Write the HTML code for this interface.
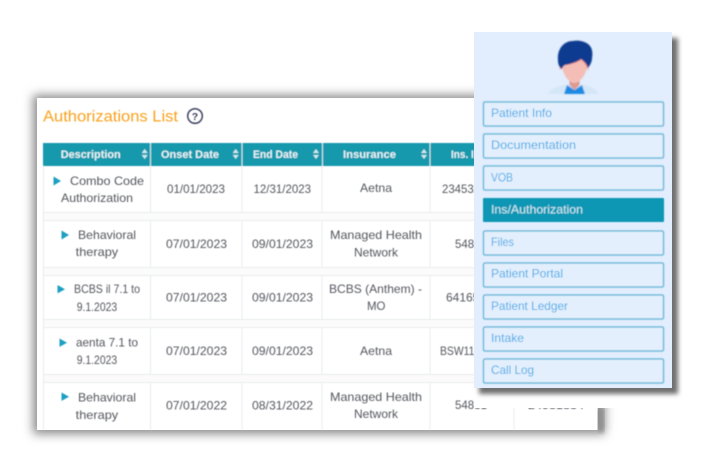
<!DOCTYPE html>
<html lang="en">
<head>
<meta charset="utf-8">
<title>Authorizations List</title>
<style>
html,body{margin:0;padding:0;background:#fff;width:710px;height:473px;overflow:hidden}
svg{display:block;position:absolute;left:0;top:0}
text{font-family:"Liberation Sans",sans-serif}
.c{font-size:12px;fill:#54575e}
.h{font-size:11px;font-weight:bold;fill:#e6f4f6}
.m{font-size:12px;fill:#45ace6}
.l{stroke:#e8ebee;stroke-width:1}
.b{fill:#e4effd;stroke:#72bbdb;stroke-width:1.5}
.a{fill:#1a9fc2}
.s{fill:#cfe9ee}
</style>
</head>
<body>
<svg width="710" height="473" viewBox="0 0 710 473" xmlns="http://www.w3.org/2000/svg">
<defs>
<filter id="sh1" x="-10%" y="-15%" width="120%" height="130%"><feGaussianBlur stdDeviation="5"/></filter>
<filter id="sh2" x="-15%" y="-10%" width="130%" height="120%"><feGaussianBlur stdDeviation="2.5"/></filter>
<filter id="soft" x="-2%" y="-2%" width="104%" height="104%"><feGaussianBlur stdDeviation="0.55"/></filter>
<filter id="av" x="-10%" y="-10%" width="120%" height="120%"><feGaussianBlur stdDeviation="0.7"/></filter>
</defs>

<!-- card shadow -->
<rect x="33" y="95" width="572" height="339" fill="#8a8a8a" filter="url(#sh1)"/>
<rect x="37" y="98" width="561" height="332" fill="#fff"/>
<rect x="598" y="408" width="6" height="24" fill="#8f8f8f" filter="url(#sh2)"/>

<g filter="url(#soft)">
<text x="43" y="121.500" font-size="15.500" fill="#f9a11f" textLength="135" lengthAdjust="spacingAndGlyphs">Authorizations List</text>
<circle cx="195" cy="116" r="7.300" fill="none" stroke="#3f4260" stroke-width="1.500"/>
<text x="195" y="120" font-size="10.500" font-weight="bold" fill="#3f4260" text-anchor="middle">?</text>

<!-- header -->
<rect x="43" y="143" width="471" height="23" fill="#1299ad"/>
<rect x="150" y="143" width="1" height="23" fill="#cfe9ee"/>
<rect x="241.500" y="143" width="1" height="23" fill="#cfe9ee"/>
<rect x="322" y="143" width="1" height="23" fill="#cfe9ee"/>
<rect x="429.500" y="143" width="1" height="23" fill="#cfe9ee"/>
<text class="h" x="60.700" y="158" textLength="60" lengthAdjust="spacingAndGlyphs">Description</text>
<text class="h" x="161" y="158" textLength="58" lengthAdjust="spacingAndGlyphs">Onset Date</text>
<text class="h" x="253" y="158" textLength="45" lengthAdjust="spacingAndGlyphs">End Date</text>
<text class="h" x="343" y="158" textLength="53" lengthAdjust="spacingAndGlyphs">Insurance</text>
<text class="h" x="451" y="158" textLength="30" lengthAdjust="spacingAndGlyphs">Ins. ID</text>
<path class="s" d="M141.700 153l3-4 3 4zM141.700 155l3 4 3-4zM232.700 153l3-4 3 4zM232.700 155l3 4 3-4zM313 153l3-4 3 4zM313 155l3 4 3-4zM421 153l3-4 3 4zM421 155l3 4 3-4z"/>

<!-- grid -->
<g class="l">
<path d="M43.500 166V430M150.500 166V430M242 166V430M322 166V430M430 166V430M514 166V430" fill="none"/>
<path d="M43 212.500H598M43 220.500H598M43 267.500H598M43 275.500H598M43 319.500H598M43 327.500H598M43 374.500H598M43 382.500H598" fill="none"/>
</g>
<rect x="44" y="213" width="554" height="7" fill="#fbfbfc"/>
<rect x="44" y="268" width="554" height="7" fill="#fbfbfc"/>
<rect x="44" y="320" width="554" height="7" fill="#fbfbfc"/>
<rect x="44" y="375" width="554" height="7" fill="#fbfbfc"/>

<!-- row 1 -->
<path class="a" d="M53.500 176.500l7.500 4.500-7.500 4.500z"/>
<text class="c" x="70" y="185" textLength="74" lengthAdjust="spacingAndGlyphs">Combo Code</text>
<text class="c" x="61" y="202" textLength="72" lengthAdjust="spacingAndGlyphs">Authorization</text>
<text class="c" x="167" y="193" textLength="58" lengthAdjust="spacingAndGlyphs">01/01/2023</text>
<text class="c" x="253.500" y="193" textLength="57.500" lengthAdjust="spacingAndGlyphs">12/31/2023</text>
<text class="c" x="360" y="192" textLength="32" lengthAdjust="spacingAndGlyphs">Aetna</text>
<text class="c" x="442" y="193" textLength="38" lengthAdjust="spacingAndGlyphs">234532</text>

<!-- row 2 -->
<path class="a" d="M61.500 230.500l7.500 4.500-7.500 4.500z"/>
<text class="c" x="78" y="239" textLength="58" lengthAdjust="spacingAndGlyphs">Behavioral</text>
<text class="c" x="75.700" y="256" textLength="42.500" lengthAdjust="spacingAndGlyphs">therapy</text>
<text class="c" x="166" y="248" textLength="61" lengthAdjust="spacingAndGlyphs">07/01/2023</text>
<text class="c" x="252" y="248" textLength="61" lengthAdjust="spacingAndGlyphs">09/01/2023</text>
<text class="c" x="330" y="239" textLength="92" lengthAdjust="spacingAndGlyphs">Managed Health</text>
<text class="c" x="354" y="256.500" textLength="44" lengthAdjust="spacingAndGlyphs">Network</text>
<text class="c" x="455" y="248" textLength="32" lengthAdjust="spacingAndGlyphs">54831</text>

<!-- row 3 -->
<path class="a" d="M57.500 285l7.500 4.200-7.500 4.200z"/>
<text class="c" x="74" y="293" textLength="66" lengthAdjust="spacingAndGlyphs">BCBS il 7.1 to</text>
<text class="c" x="76.700" y="311" textLength="40.500" lengthAdjust="spacingAndGlyphs">9.1.2023</text>
<text class="c" x="166" y="301.500" textLength="61" lengthAdjust="spacingAndGlyphs">07/01/2023</text>
<text class="c" x="252" y="301.500" textLength="61" lengthAdjust="spacingAndGlyphs">09/01/2023</text>
<text class="c" x="329" y="293" textLength="93" lengthAdjust="spacingAndGlyphs">BCBS (Anthem) -</text>
<text class="c" x="367" y="310" textLength="18.500" lengthAdjust="spacingAndGlyphs">MO</text>
<text class="c" x="446" y="301.500" textLength="40" lengthAdjust="spacingAndGlyphs">641658</text>

<!-- row 4 -->
<path class="a" d="M59.500 338.500l7.500 4.200-7.500 4.200z"/>
<text class="c" x="76" y="346.700" textLength="62" lengthAdjust="spacingAndGlyphs">aenta 7.1 to</text>
<text class="c" x="76.700" y="364" textLength="40.500" lengthAdjust="spacingAndGlyphs">9.1.2023</text>
<text class="c" x="166" y="355" textLength="61" lengthAdjust="spacingAndGlyphs">07/01/2023</text>
<text class="c" x="252" y="355" textLength="61" lengthAdjust="spacingAndGlyphs">09/01/2023</text>
<text class="c" x="360" y="355" textLength="32" lengthAdjust="spacingAndGlyphs">Aetna</text>
<text class="c" x="440" y="355" textLength="46" lengthAdjust="spacingAndGlyphs">BSW1163</text>

<!-- row 5 -->
<path class="a" d="M61.500 392.500l7.500 4.200-7.500 4.200z"/>
<text class="c" x="78" y="401.500" textLength="58" lengthAdjust="spacingAndGlyphs">Behavioral</text>
<text class="c" x="75.700" y="419" textLength="42.500" lengthAdjust="spacingAndGlyphs">therapy</text>
<text class="c" x="166" y="409.300" textLength="61" lengthAdjust="spacingAndGlyphs">07/01/2022</text>
<text class="c" x="252" y="409.300" textLength="61" lengthAdjust="spacingAndGlyphs">08/31/2022</text>
<text class="c" x="330" y="401" textLength="92" lengthAdjust="spacingAndGlyphs">Managed Health</text>
<text class="c" x="354" y="418" textLength="44" lengthAdjust="spacingAndGlyphs">Network</text>
<text class="c" x="455" y="409" textLength="32" lengthAdjust="spacingAndGlyphs">54831</text>
<text class="c" x="528" y="409" textLength="56" lengthAdjust="spacingAndGlyphs">24981834</text>
</g>

<!-- white patches around sidebar -->
<rect x="474" y="20" width="236" height="388" fill="#fff"/>

<!-- sidebar -->
<rect x="479" y="38" width="199" height="356" fill="#6f6f6f" filter="url(#sh2)"/>
<rect x="474" y="32" width="198" height="356" fill="#e2edfd"/>

<!-- avatar -->
<g filter="url(#av)">
<path d="M548 94c2-5 9-7 16-9h20c7 2 14 4 14 9z" fill="#d3e7f8"/>
<path d="M564 94l3-9 7.500 5 7.500-5 3 9z" fill="#1f8ae2"/>
<path d="M569.500 79h10v6l-5 5-5-5z" fill="#dd9a92"/>
<path d="M561 60c0-8 6-13 14-13s13 5 13 13c0 7-2 12-5 17-3 4-6 6-8.500 6s-6-2-8.500-6c-3-5-5-10-5-17z" fill="#f4bdb6"/>
<path d="M560 70c-1-6 1-12 6-14h17c4 3 6 9 5 15-1-5-4-9-7-11-4 3-11 5-16 5-2 2-4 3-5 5z" fill="#ee8f84"/>
<path d="M558 60c-1-10 5-19 15-19 5-1 11 0 15 3 4 3 5 8 4 14 0 4-2 7-4 10-1-4-4-7-7-9-4 3-11 5-16 6-2 1-3 3-3 4-3-2-4-5-4-9z" fill="#0b3a8f"/>
</g>

<!-- menu buttons -->
<g filter="url(#soft)">
<rect class="b" x="483.500" y="102" width="180" height="24" rx="1.500"/>
<rect class="b" x="483.500" y="134" width="180" height="24" rx="1.500"/>
<rect class="b" x="483.500" y="166" width="180" height="24" rx="1.500"/>
<rect x="483" y="198" width="181" height="24" rx="1" fill="#0a97b5"/>
<rect class="b" x="483.500" y="231" width="180" height="24" rx="1.500"/>
<rect class="b" x="483.500" y="263" width="180" height="24" rx="1.500"/>
<rect class="b" x="483.500" y="295" width="180" height="24" rx="1.500"/>
<rect class="b" x="483.500" y="327" width="180" height="24" rx="1.500"/>
<rect class="b" x="483.500" y="359" width="180" height="24" rx="1.500"/>
<text class="m" x="491" y="117" textLength="61" lengthAdjust="spacingAndGlyphs">Patient Info</text>
<text class="m" x="491" y="149" textLength="85" lengthAdjust="spacingAndGlyphs">Documentation</text>
<text class="m" x="491" y="181.500" textLength="22" lengthAdjust="spacingAndGlyphs">VOB</text>
<text class="m" x="491" y="213.500" textLength="92" lengthAdjust="spacingAndGlyphs" style="fill:#cdeaf2">Ins/Authorization</text>
<text class="m" x="491" y="246" textLength="23" lengthAdjust="spacingAndGlyphs">Files</text>
<text class="m" x="491" y="277.500" textLength="72" lengthAdjust="spacingAndGlyphs">Patient Portal</text>
<text class="m" x="491" y="310" textLength="77" lengthAdjust="spacingAndGlyphs">Patient Ledger</text>
<text class="m" x="491" y="342" textLength="33" lengthAdjust="spacingAndGlyphs">Intake</text>
<text class="m" x="491" y="374" textLength="43" lengthAdjust="spacingAndGlyphs">Call Log</text>
</g>
</svg>
</body>
</html>
